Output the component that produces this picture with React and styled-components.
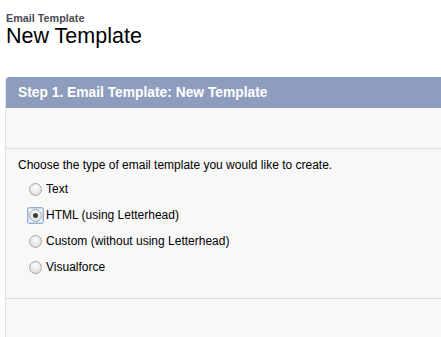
import React, { useState } from "react";
import styled, { createGlobalStyle } from "styled-components";

const Global = createGlobalStyle`
  html, body { margin: 0; padding: 0; background: #ffffff; overflow: hidden; }
  body { font-family: "Liberation Sans", Arial, Helvetica, sans-serif; color: #000; }
`;

const Page = styled.div`
  width: 441px;
  height: 337px;
  overflow: hidden;
`;

const TitleBlock = styled.div`
  padding: 12px 0 0 6px;
`;

const PageType = styled.div`
  font-size: 10.8px;
  line-height: 13px;
  font-weight: bold;
  color: #4a4a56;
`;

const PageTitle = styled.h1`
  margin: 0;
  font-size: 21.5px;
  line-height: 23px;
  font-weight: normal;
  color: #000;
`;

const Panel = styled.div`
  margin: 29px 0 0 5px;
  width: 470px;
  background: #f8f8f8;
  border-left: 1px solid #e3e3e3;
  border-top-left-radius: 4px;
  overflow: hidden;
`;

const PanelHeader = styled.div`
  height: 31px;
  display: flex;
  align-items: center;
  background: #8e9dbe;
  color: #ffffff;
  font-size: 13.8px;
  font-weight: bold;
  margin-left: -1px;
  padding-left: 13px;
`;

const Section = styled.div`
  height: ${(p) => p.$h}px;
  border-bottom: ${(p) => (p.$line ? "1px solid #dcdcdc" : "none")};
`;

const Body = styled.div`
  padding: 9px 0 18px 12px;
  border-bottom: 1px solid #dcdcdc;
`;

const Prompt = styled.div`
  font-size: 12px;
  line-height: 14px;
  margin-bottom: 4px;
`;

const Option = styled.label`
  display: flex;
  align-items: center;
  height: 26px;
  padding-left: 11px;
  font-size: 12px;
  cursor: pointer;
`;

const Radio = styled.input.attrs({ type: "radio" })`
  appearance: none;
  -webkit-appearance: none;
  margin: 0;
  width: 13px;
  height: 13px;
  border-radius: 50%;
  border: 1px solid #a9a9a9;
  background: radial-gradient(circle at 50% 35%, #fdfdfd 0%, #e8e8e8 55%, #d4d4d4 100%);
  box-sizing: border-box;
  position: relative;
  flex: none;
  &:checked::after {
    content: "";
    position: absolute;
    left: 3px;
    top: 3px;
    width: 5px;
    height: 5px;
    border-radius: 50%;
    background: #3c3c3c;
  }
`;

const FocusRing = styled.span`
  display: inline-flex;
  align-items: center;
  justify-content: center;
  width: 15px;
  height: 15px;
  margin: 0 3px 0 -1px;
  border-radius: 2px;
  box-shadow: ${(p) => (p.$on ? "0 0 0 1px #8fb1e0, inset 0 0 0 1px #c4d6f0" : "none")};
`;

const options = [
  "Text",
  "HTML (using Letterhead)",
  "Custom (without using Letterhead)",
  "Visualforce",
];

export default function App() {
  const [sel, setSel] = useState(1);
  return (
    <Page>
      <Global />
      <TitleBlock>
        <PageType>Email Template</PageType>
        <PageTitle>New Template</PageTitle>
      </TitleBlock>
      <Panel>
        <PanelHeader>Step 1. Email Template: New Template</PanelHeader>
        <Section $h={40} $line />
        <Body>
          <Prompt>Choose the type of email template you would like to create.</Prompt>
          {options.map((o, i) => (
            <Option key={o}>
              <FocusRing $on={sel === i}>
                <Radio name="tpl" checked={sel === i} onChange={() => setSel(i)} />
              </FocusRing>
              {o}
            </Option>
          ))}
        </Body>
        <Section $h={60} />
      </Panel>
    </Page>
  );
}
